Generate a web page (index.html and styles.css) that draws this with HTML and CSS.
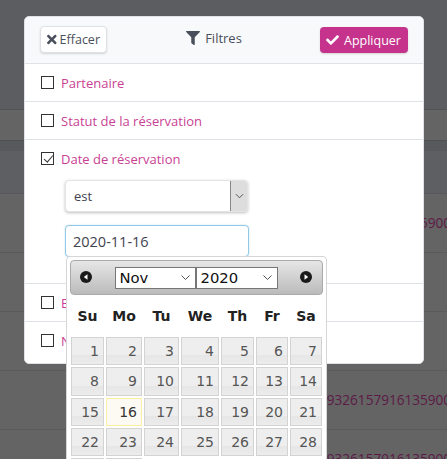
FILE: index.html
```html
<!DOCTYPE html>
<html lang="fr">
<head>
  <meta charset="UTF-8" />
  <meta name="viewport" content="width=device-width, initial-scale=1.0" />
  <title>Filtres</title>
  <link rel="stylesheet" href="styles.css">
</head>
<body>

  <div class="page">
    <div class="bg-row bg-top"></div>
    <div class="bg-row bg-head"></div>
    <div class="bg-row bg-band"></div>
    <div class="bg-row bg-sub"></div>
    <div class="bg-row"><span class="ref">1932615791613590000</span></div>
    <div class="bg-row"></div>
    <div class="bg-row"></div>
    <div class="bg-row"><span class="ref">1932615791613590000</span></div>
    <div class="bg-row"><span class="ref">1932615791613590000</span></div>
  </div>

  <div class="modal">
    <div class="modal-head">
      <button class="btn btn-clear">
        <svg class="icon" viewBox="0 64 352 384"><path d="M242.72 256l100.07-100.07c12.28-12.28 12.28-32.19 0-44.48l-22.24-22.24c-12.28-12.28-32.19-12.28-44.48 0L176 189.28 75.93 89.21c-12.28-12.28-32.19-12.28-44.48 0L9.21 111.45c-12.28 12.28-12.28 32.19 0 44.48L109.28 256 9.21 356.07c-12.28 12.28-12.28 32.19 0 44.48l22.24 22.24c12.28 12.28 32.2 12.28 44.48 0L176 322.72l100.07 100.07c12.28 12.28 32.2 12.28 44.48 0l22.24-22.24c12.28-12.28 12.28-32.19 0-44.48L242.72 256z"/></svg>
        Effacer
      </button>
      <div class="modal-title">
        <svg class="icon-filter" viewBox="0 0 512 512"><path d="M487.976 0H24.028C2.71 0-8.047 25.866 7.058 40.971L192 225.941V432c0 7.831 3.821 15.489 10.237 19.973l80 55.98C298.02 518.999 320 507.96 320 487.98V225.941l184.947-184.97C520.021 25.896 509.338 0 487.976 0z"/></svg>
        Filtres
      </div>
      <button class="btn btn-apply">
        <svg class="icon-check" viewBox="0 64 512 384"><path d="M173.898 439.404l-166.4-166.4c-9.997-9.997-9.997-26.206 0-36.204l36.203-36.204c9.997-9.998 26.207-9.998 36.204 0L192 312.69 432.095 72.596c9.997-9.997 26.207-9.997 36.204 0l36.203 36.204c9.997 9.997 9.997 26.206 0 36.204l-294.4 294.401c-9.998 9.997-26.207 9.997-36.204-.001z"/></svg>
        Appliquer
      </button>
    </div>

    <div class="filter">
      <label class="filter-label"><input type="checkbox"> Partenaire</label>
    </div>
    <div class="filter">
      <label class="filter-label"><input type="checkbox"> Statut de la réservation</label>
    </div>
    <div class="filter filter-open">
      <label class="filter-label"><input type="checkbox" checked> Date de réservation</label>
      <div class="fake-select">
        <span class="fake-select-value">est</span>
        <span class="fake-select-arrow">
          <svg viewBox="0 0 10 6"><path d="M1 1l4 4 4-4" fill="none" stroke="#444" stroke-width="1"/></svg>
        </span>
      </div>
      <input type="text" class="date-input" value="2020-11-16">
    </div>
    <div class="filter">
      <label class="filter-label"><input type="checkbox"> Emplacement</label>
    </div>
    <div class="filter filter-last">
      <label class="filter-label"><input type="checkbox"> Numéro</label>
    </div>
  </div>

  <div class="datepicker">
    <div class="dp-header">
      <span class="dp-nav">
        <svg viewBox="0 0 12 12"><circle cx="6" cy="6" r="6"/><path d="M7.5 3.2v5.6L3.8 6z" fill="#fff"/></svg>
      </span>
      <div class="dp-title">
        <select class="dp-select"><option>Nov</option></select><select class="dp-select"><option>2020</option></select>
      </div>
      <span class="dp-nav">
        <svg viewBox="0 0 12 12"><circle cx="6" cy="6" r="6"/><path d="M4.5 3.2v5.6L8.2 6z" fill="#fff"/></svg>
      </span>
    </div>
    <table class="dp-calendar">
      <thead>
        <tr><th>Su</th><th>Mo</th><th>Tu</th><th>We</th><th>Th</th><th>Fr</th><th>Sa</th></tr>
      </thead>
      <tbody>
        <tr><td><a>1</a></td><td><a>2</a></td><td><a>3</a></td><td><a>4</a></td><td><a>5</a></td><td><a>6</a></td><td><a>7</a></td></tr>
        <tr><td><a>8</a></td><td><a>9</a></td><td><a>10</a></td><td><a>11</a></td><td><a>12</a></td><td><a>13</a></td><td><a>14</a></td></tr>
        <tr><td><a>15</a></td><td><a class="today">16</a></td><td><a>17</a></td><td><a>18</a></td><td><a>19</a></td><td><a>20</a></td><td><a>21</a></td></tr>
        <tr><td><a>22</a></td><td><a>23</a></td><td><a>24</a></td><td><a>25</a></td><td><a>26</a></td><td><a>27</a></td><td><a>28</a></td></tr>
        <tr><td><a>29</a></td><td><a>30</a></td><td></td><td></td><td></td><td></td><td></td></tr>
      </tbody>
    </table>
  </div>

</body>
</html>
```

FILE: styles.css
```css
html, body {
  height: 100%;
}

body {
  margin: 0;
  overflow: hidden;
  position: relative;
  background-color: #646464;
  font-family: "Open Sans", "Noto Sans", sans-serif;
  font-size: 13px;
  color: #4a4f5c;
}

/* page behind the modal */
.page {
  height: 100%;
  overflow: hidden;
}

.bg-row {
  height: 58px;
  border-bottom: 1px solid #5a5a5a;
  display: flex;
  align-items: center;
  background-color: #646464;
}

.bg-top {
  height: 109px;
  background-color: #5c5d61;
  border-bottom-color: #535457;
}

.bg-head {
  height: 30px;
  border-bottom-color: #4f5054;
}

.bg-band {
  height: 10px;
  background-color: #58595d;
  border-bottom: 0;
}

.bg-sub {
  height: 42px;
  background-color: #5e5f63;
  border-bottom-color: #58585a;
}

.ref {
  padding-left: 319px;
  margin-bottom: 1px;
  font-size: 13.6px;
  color: #5c1a46;
  white-space: nowrap;
}

/* modal */
.modal {
  position: absolute;
  top: 16px;
  left: 24px;
  width: 400px;
  height: 348px;
  box-sizing: border-box;
  background-color: #fff;
  border: 1px solid #dee2e6;
  border-radius: 5px;
  overflow: hidden;
}

.modal-head {
  height: 47px;
  display: flex;
  justify-content: space-between;
  align-items: flex-start;
  padding: 9px 15px 0 15px;
  box-sizing: border-box;
  background-color: #f8f9fb;
  border-bottom: 1px solid #dee2e6;
}

.btn {
  display: flex;
  align-items: center;
  height: 27px;
  padding: 0 6px;
  font-family: inherit;
  font-size: 12.5px;
  border-radius: 4px;
  box-shadow: 0 1px 2px rgba(0, 0, 0, 0.15);
}

.btn-clear {
  gap: 3px;
  width: 67px;
  background-color: #fff;
  border: 1px solid #dee2e6;
  color: #4a4f5c;
}

.btn-apply {
  gap: 5px;
  width: 88px;
  margin-top: 1px;
  height: 26px;
  background-color: #c5338c;
  border: 0;
  color: #fff;
}

.icon {
  width: 10px;
  height: 11px;
  fill: #4a4f5c;
}

.icon-check {
  width: 13px;
  height: 10px;
  fill: #fff;
}

.modal-title {
  display: flex;
  align-items: center;
  gap: 5px;
  margin-top: 3px;
  margin-left: 1px;
  font-size: 13px;
  color: #4a4f5c;
}

.icon-filter {
  width: 14px;
  height: 14px;
  fill: #4a4f5c;
}

.filter {
  height: 37px;
  padding: 0 16px;
  border-bottom: 1px solid #dee2e6;
}

.filter-open {
  height: 143px;
}

.filter-last {
  border-bottom: 0;
}

.filter-label {
  height: 37px;
  display: flex;
  align-items: center;
  gap: 7px;
  color: #c93f94;
  font-size: 13px;
}

.filter-label input {
  appearance: none;
  margin: 0;
  width: 13px;
  height: 13px;
  border: 1px solid #333;
  background-color: #fff;
  position: relative;
}

.filter-label input:checked::after {
  content: "";
  position: absolute;
  left: 3.5px;
  top: 0;
  width: 3.5px;
  height: 8px;
  border: solid #333;
  border-width: 0 1.2px 1.2px 0;
  transform: rotate(40deg);
}

.fake-select {
  width: 183px;
  height: 32px;
  box-sizing: border-box;
  margin: 3px 0 13px 24px;
  display: flex;
  background-color: #fff;
  border: 1px solid #e2e4e8;
  border-radius: 4px;
  box-shadow: 0 1px 3px rgba(0, 0, 0, 0.25);
  overflow: hidden;
}

.fake-select-value {
  flex: 1;
  padding-left: 8px;
  line-height: 30px;
  font-size: 13px;
  color: #3f4350;
}

.fake-select-arrow {
  width: 16px;
  display: flex;
  align-items: center;
  justify-content: center;
  background-color: #dddddd;
  border-left: 1px solid #888;
}

.fake-select-arrow svg {
  width: 9px;
  height: 6px;
}

.date-input {
  display: block;
  width: 184px;
  height: 32px;
  box-sizing: border-box;
  margin-left: 24px;
  padding: 0 7px;
  font-family: inherit;
  font-size: 14.5px;
  color: #3f4350;
  border: 1px solid #93c9e6;
  border-radius: 4px;
  box-shadow: 0 0 2px rgba(147, 201, 230, 0.6);
  outline: 0;
}

/* calendar popup */
.datepicker {
  position: absolute;
  top: 256px;
  left: 66px;
  width: 261px;
  box-sizing: border-box;
  padding: 3px;
  background-color: #fff;
  border: 1px solid #d6d6d6;
  border-radius: 4px;
  font-family: "DejaVu Sans", sans-serif;
  font-size: 14px;
}

.dp-header {
  height: 35px;
  box-sizing: border-box;
  display: flex;
  align-items: center;
  justify-content: space-between;
  padding: 0 10px 0 9px;
  background: linear-gradient(#e6e6e6, #bbbbbb);
  border: 1px solid #aaaaaa;
  border-radius: 4px;
}

.dp-nav {
  display: flex;
  margin-bottom: 2px;
}

.dp-nav svg {
  width: 12px;
  height: 12px;
  fill: #1a1a1a;
}

.dp-title {
  display: flex;
}

.dp-select {
  appearance: none;
  width: 82px;
  height: 22px;
  font-family: inherit;
  font-size: 14.8px;
  color: #111;
  background: #fff url("data:image/svg+xml,%3Csvg xmlns='http://www.w3.org/2000/svg' width='9' height='5'%3E%3Cpath d='M.5.5l4 4 4-4' fill='none' stroke='%23555'/%3E%3C/svg%3E") no-repeat right 5px center;
  border: 1px solid #767676;
  border-radius: 0;
  padding: 0 0 0 4px;
}

.dp-select:first-child {
  width: 81px;
}

.dp-calendar {
  width: 253px;
  table-layout: fixed;
  border-collapse: collapse;
}

.dp-calendar th {
  padding: 13px 0 12px;
  font-weight: bold;
  font-size: 14px;
  color: #222;
}

.dp-calendar th:nth-child(1) { width: 35px; }
.dp-calendar th:nth-child(2) { width: 38px; }
.dp-calendar th:nth-child(3) { width: 37px; }
.dp-calendar th:nth-child(4) { width: 40px; }
.dp-calendar th:nth-child(5) { width: 35px; }
.dp-calendar th:nth-child(6) { width: 34px; }
.dp-calendar th:nth-child(7) { width: 34px; }

.dp-calendar td {
  padding: 1px;
  border: 0;
}

.dp-calendar a {
  display: block;
  padding: 3px 4px 3px 3px;
  text-align: right;
  color: #555;
  line-height: 20.3px;
  border: 1px solid #d3d3d3;
  background: linear-gradient(#eeeeee 65%, #e6e6e6 65%, #ececec);
}

.dp-calendar a.today {
  background: #fcfaf2;
  border-color: #fcefa1;
  color: #363636;
}
```
